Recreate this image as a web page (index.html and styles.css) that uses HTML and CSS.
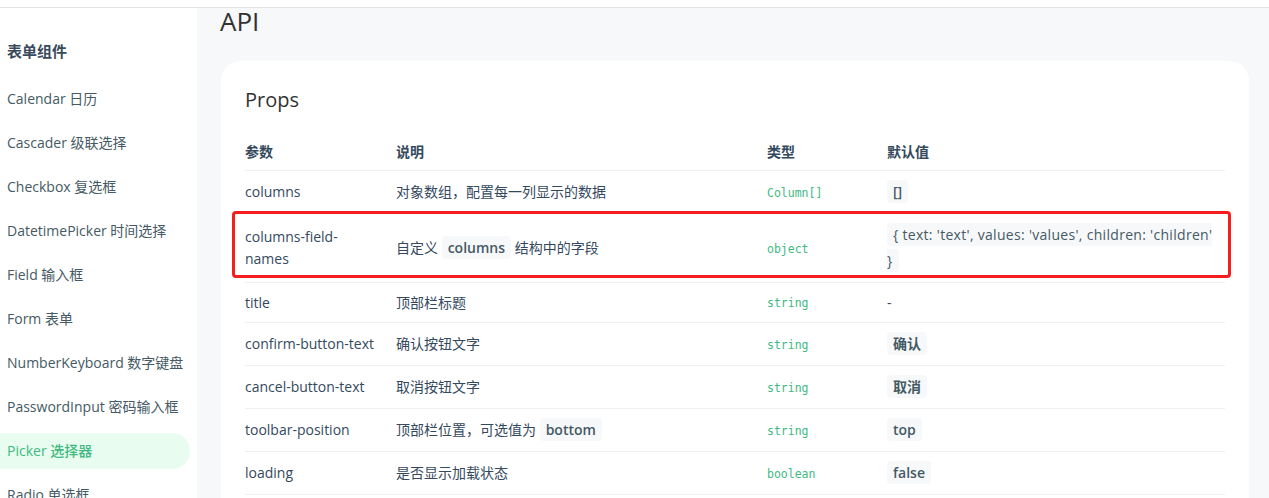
FILE: index.html
```html
<!DOCTYPE html>
<html lang="zh-CN">
<head>
<meta charset="utf-8">
<title>Picker 选择器</title>
<link rel="stylesheet" href="styles.css">
</head>
<body>
<div class="topbar"></div>
<div class="layout">
  <nav class="sidebar">
    <div class="nav-title">表单组件</div>
    <a class="nav-item" href="#">Calendar 日历</a>
    <a class="nav-item" href="#">Cascader 级联选择</a>
    <a class="nav-item" href="#">Checkbox 复选框</a>
    <a class="nav-item" href="#">DatetimePicker 时间选择</a>
    <a class="nav-item" href="#">Field 输入框</a>
    <a class="nav-item" href="#">Form 表单</a>
    <a class="nav-item" href="#">NumberKeyboard 数字键盘</a>
    <a class="nav-item" href="#">PasswordInput 密码输入框</a>
    <a class="nav-item active" href="#">Picker 选择器</a>
    <a class="nav-item" href="#">Radio 单选框</a>
  </nav>
  <main class="content">
    <h2 class="api-title">API</h2>
    <section class="card">
      <h3 class="card-title">Props</h3>
      <table class="props">
        <colgroup>
          <col class="c-name">
          <col class="c-desc">
          <col class="c-type">
          <col class="c-def">
        </colgroup>
        <thead>
          <tr><th>参数</th><th>说明</th><th>类型</th><th>默认值</th></tr>
        </thead>
        <tbody>
          <tr><td>columns</td><td>对象数组，配置每一列显示的数据</td><td><em>Column[]</em></td><td><code>[]</code></td></tr>
          <tr><td>columns-field-names</td><td>自定义 <code>columns</code> 结构中的字段</td><td><em>object</em></td><td><code class="long">{ text: 'text', values: 'values', children: 'children' }</code></td></tr>
          <tr><td>title</td><td>顶部栏标题</td><td><em>string</em></td><td>-</td></tr>
          <tr><td>confirm-button-text</td><td>确认按钮文字</td><td><em>string</em></td><td><code>确认</code></td></tr>
          <tr><td>cancel-button-text</td><td>取消按钮文字</td><td><em>string</em></td><td><code>取消</code></td></tr>
          <tr><td>toolbar-position</td><td>顶部栏位置，可选值为 <code>bottom</code></td><td><em>string</em></td><td><code>top</code></td></tr>
          <tr><td>loading</td><td>是否显示加载状态</td><td><em>boolean</em></td><td><code>false</code></td></tr>
          <tr><td>show-toolbar</td><td>是否显示顶部栏</td><td><em>boolean</em></td><td><code>true</code></td></tr>
        </tbody>
      </table>
      <div class="highlight"></div>
    </section>
  </main>
</div>
</body>
</html>
```
FILE: styles.css
```css
html, body {
  margin: 0;
  height: 100%;
  overflow: hidden;
}
body {
  font-family: "Open Sans", "Noto Sans CJK SC", sans-serif;
  color: #34495e;
  background: #fff;
}
.topbar {
  height: 7px;
  background: #fff;
  border-bottom: 1px solid #e3e4e8;
}
.layout {
  display: flex;
  height: calc(100% - 8px);
}
.sidebar {
  width: 197px;
  flex: none;
  background: #fff;
  padding-top: 29px;
  display: flex;
  flex-direction: column;
  align-items: flex-start;
}
.nav-title {
  padding-left: 7px;
  font-size: 15px;
  font-weight: 700;
  line-height: 28px;
  color: #3a4a5c;
  margin-bottom: 16px;
}
.nav-item {
  display: block;
  box-sizing: border-box;
  width: 190px;
  padding: 8px 0 8px 7px;
  margin-bottom: 8px;
  font-size: 14px;
  line-height: 20px;
  color: #455a64;
  text-decoration: none;
  border-radius: 0 18px 18px 0;
  white-space: nowrap;
}
.nav-item.active {
  color: #42b983;
  font-weight: 500;
  background: #e8fcef;
}
.content {
  flex: 1;
  background: #f7f8fa;
  padding: 0 20px 0 24px;
  overflow: hidden;
}
.api-title {
  margin: 0 0 27px -1px;
  font-size: 26px;
  font-weight: 400;
  line-height: 26px;
  color: #323233;
}
.card {
  position: relative;
  background: #fff;
  border-radius: 20px;
  padding: 25px 24px 24px;
}
.card-title {
  margin: 0 0 19px;
  font-size: 20px;
  font-weight: 500;
  line-height: 28px;
  color: #323233;
}
.props {
  width: 100%;
  table-layout: fixed;
  border-collapse: collapse;
  font-size: 14px;
  line-height: 22px;
  color: #34495e;
}
.c-name { width: 141px; }
.c-desc { width: 371px; }
.c-type { width: 120px; }
.c-def { width: 348px; }
.props th {
  padding: 8px 10px;
  text-align: left;
  font-weight: 600;
  line-height: 21px;
}
.props td {
  padding: 8px 10px;
  border-top: 1px solid #eef0f4;
  vertical-align: middle;
}
.props tr > :first-child { padding-left: 0; }
.props tr > :last-child { padding-right: 0; }
.props tbody tr:last-child td { border-bottom: 1px solid #eef0f4; }
.props em {
  font-style: normal;
  font-family: "DejaVu Sans Mono", monospace;
  font-size: 11.5px;
  color: #42b983;
}
.props code {
  font-family: inherit;
  font-size: 14px;
  font-weight: 600;
  line-height: 26px;
  padding: 2px 6px;
  background: #f7f8fa;
  border-radius: 4px;
  color: #455a64;
}
.props code.long {
  font-weight: 500;
  letter-spacing: 0.3px;
}
.highlight {
  position: absolute;
  left: 11px;
  top: 150px;
  width: 993px;
  height: 61px;
  border: 3px solid #f51d1d;
  border-radius: 4px;
  pointer-events: none;
}
```
